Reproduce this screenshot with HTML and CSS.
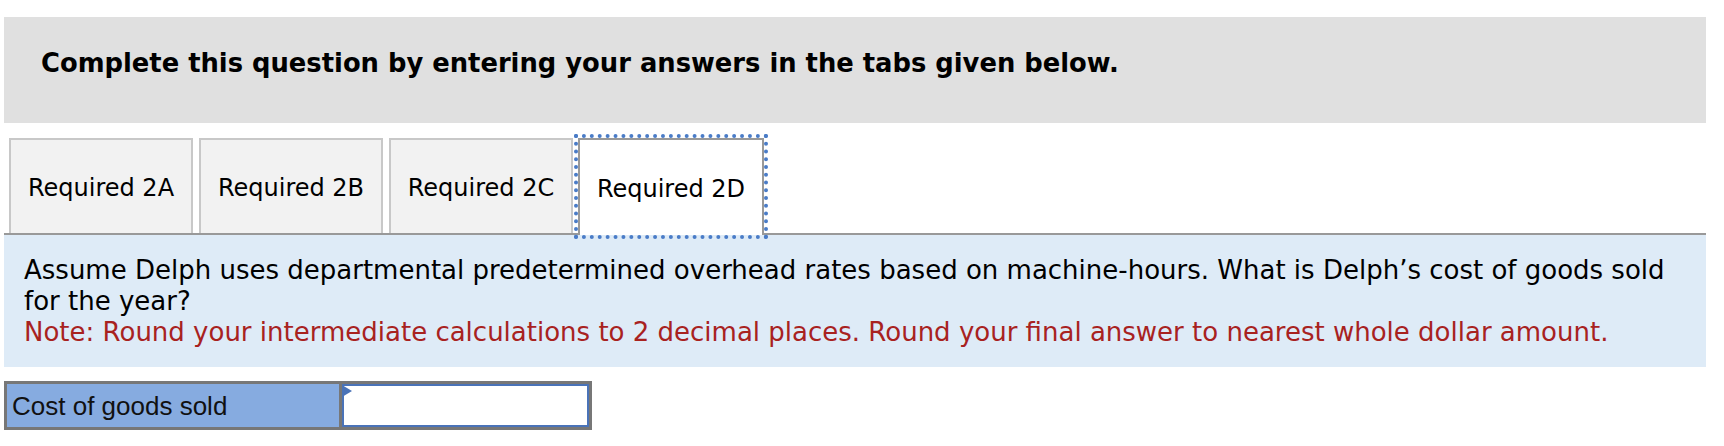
FILE: index.html
```html
<!DOCTYPE html>
<html>
<head>
<meta charset="utf-8">
<link rel="stylesheet" href="styles.css">
</head>
<body>
<div class="page">
  <div class="banner">Complete this question by entering your answers in the tabs given below.</div>
  <div class="tabs">
    <div class="tab">Required 2A</div>
    <div class="tab">Required 2B</div>
    <div class="tab">Required 2C</div>
    <div class="tab active">Required 2D</div>
  </div>
  <div class="panel">
    <p class="q">Assume Delph uses departmental predetermined overhead rates based on machine-hours. What is Delph’s cost of goods sold for the year?</p>
    <p class="note">Note: Round your intermediate calculations to 2 decimal places. Round your final answer to nearest whole dollar amount.</p>
  </div>
  <div class="answer">
    <div class="label">Cost of goods sold</div>
    <div class="input"><span class="flag"></span></div>
  </div>
</div>
</body>
</html>
```

FILE: styles.css
```css
html, body {
  margin: 0;
  padding: 0;
  background: #ffffff;
}
.page {
  width: 1702px;
  margin-left: 4px;
  padding-top: 17px;
  font-family: "DejaVu Sans", sans-serif;
  color: #000;
}
.banner {
  background: #e0e0e0;
  height: 106px;
  box-sizing: border-box;
  padding: 30px 0 0 37px;
  font-weight: bold;
  font-size: 25.8px;
  line-height: 32px;
}
.tabs {
  display: flex;
  margin-top: 15px;
  padding-left: 5px;
  gap: 6px;
  border-bottom: 2px solid #999999;
  height: 95px;
  box-sizing: content-box;
}
.tab {
  width: 184px;
  box-sizing: border-box;
  height: 95px;
  background: #f2f2f2;
  border: 2px solid #c8c8c8;
  border-bottom: none;
  display: flex;
  align-items: center;
  justify-content: center;
  font-size: 24px;
  padding-top: 3px;
}
.tab.active {
  width: 186px;
  margin-left: -1px;
  background: #ffffff;
  border: 2px solid #999999;
  border-bottom: none;
  height: 97px;
  outline: 4px dotted #4a7cc7;
  outline-offset: 0;
  position: relative;
  z-index: 1;
}
.panel {
  background: #deebf7;
  padding: 20px 20px 19px 20px;
  font-size: 26px;
  line-height: 31px;
}
.panel p {
  margin: 0;
}
.note {
  color: #a8221f;
}
.answer {
  display: flex;
  margin-top: 14px;
  width: 588px;
  height: 49px;
  box-sizing: border-box;
  border: 3px solid #777777;
}
.label {
  width: 335px;
  box-sizing: border-box;
  background: #86abe0;
  border-right: 3px solid #777777;
  font-family: "Liberation Sans", Arial, sans-serif;
  font-size: 26px;
  display: flex;
  align-items: center;
  padding-left: 5px;
  padding-top: 2px;
  color: #111;
}
.input {
  flex: 1;
  box-sizing: border-box;
  background: #ffffff;
  border: 2px solid #4a73b8;
  position: relative;
}
.flag {
  position: absolute;
  left: -2px;
  top: -1px;
  width: 0;
  height: 0;
  border-top: 6px solid transparent;
  border-bottom: 6px solid transparent;
  border-left: 10px solid #4a73b8;
}
```
